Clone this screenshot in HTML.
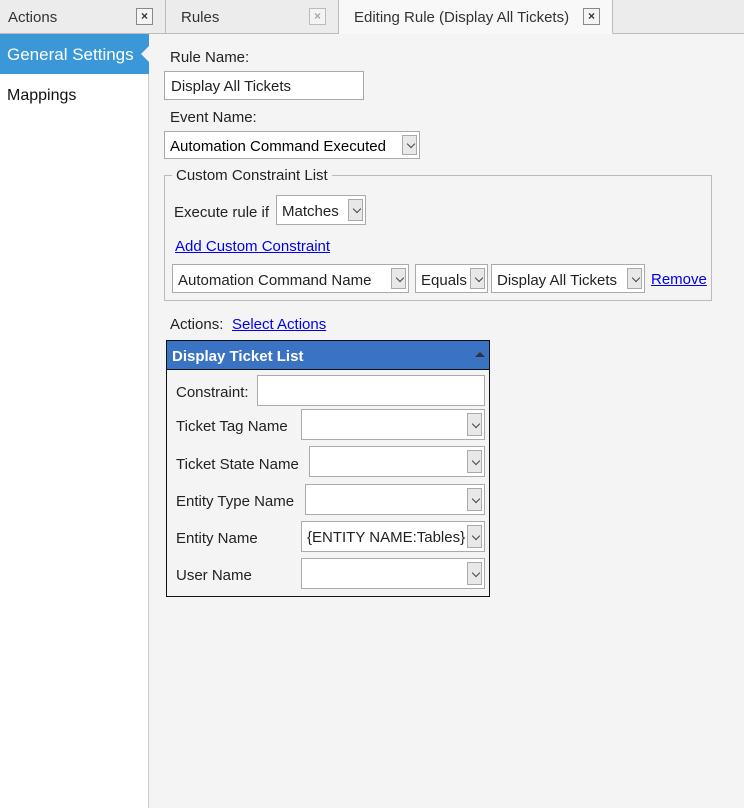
<!DOCTYPE html><html><head><style>
*{box-sizing:border-box;margin:0;padding:0}
body{width:744px;height:808px;background:#f4f4f4;font-family:"Liberation Sans",sans-serif;font-size:15px;color:#222;position:relative;overflow:hidden}
.a{position:absolute}
.tab{position:absolute;top:0;height:34px;border-right:1px solid #bbb;background:#ececec;border-bottom:1px solid #bbb;padding:9px 0 0 8px;color:#333}
.x{position:absolute;top:8px;width:17px;height:17px;border:1px solid #888;font-size:12px;font-weight:bold;text-align:center;line-height:15px;background:#f4f4f4}
.inp{position:absolute;background:#fff;border:1px solid #aaa;padding:6px 0 0 6px;white-space:nowrap;overflow:hidden}
.sel{position:absolute;background:#fff;border:1px solid #aaa;padding:7px 0 0 5px;white-space:nowrap;overflow:hidden}
.sel:after{content:"";position:absolute;right:2px;top:3px;bottom:3px;width:13px;border:1px solid #aaa;background:#e8e8e8}
.sel i{position:absolute;right:5px;top:50%;margin-top:-4px;width:6px;height:6px;border-right:1.5px solid #444;border-bottom:1.5px solid #444;transform:rotate(45deg);z-index:1}
a{color:#00e;text-decoration:underline}
</style></head><body>
<div class="a" style="left:0;top:0;width:744px;height:34px;background:#ececec;border-bottom:1px solid #bbb"></div>
<div class="tab" style="left:0;width:166px">Actions<div class="x" style="left:136px">×</div></div>
<div class="tab" style="left:166px;width:173px;padding-left:15px">Rules<div class="x" style="left:143px;color:#aaa;border-color:#bbb">×</div></div>
<div class="tab" style="left:339px;width:274px;background:#f8f8f8;border-bottom-color:#f8f8f8;padding-left:15px">Editing Rule (Display All Tickets)<div class="x" style="left:244px">×</div></div>
<div class="a" style="left:0;top:34px;width:149px;height:774px;background:#fff;border-right:1px solid #ccc"></div>
<div class="a" style="left:0;top:34px;width:149px;height:40px;background:#3a98d8;color:#fff;font-size:17px;padding:11px 0 0 7px">General Settings</div>
<div class="a" style="left:141px;top:46px;width:0;height:0;border-top:8px solid transparent;border-bottom:8px solid transparent;border-right:8px solid #f4f4f4"></div>
<div class="a" style="left:7px;top:87px;font-size:16px;color:#111">Mappings</div>

<div class="a" style="left:170px;top:49px">Rule Name:</div>
<div class="inp" style="left:164px;top:71px;width:200px;height:29px">Display All Tickets</div>
<div class="a" style="left:170px;top:109px">Event Name:</div>
<div class="sel" style="left:164px;top:131px;width:256px;height:28px;padding-top:6px;color:#000">Automation Command Executed<i></i></div>

<div class="a" style="left:164px;top:175px;width:548px;height:126px;border:1px solid #bbb"></div>
<div class="a" style="left:172px;top:167px;background:#f4f4f4;padding:0 4px">Custom Constraint List</div>
<div class="a" style="left:174px;top:204px">Execute rule if</div>
<div class="sel" style="left:276px;top:195px;width:90px;height:30px">Matches<i></i></div>
<div class="a" style="left:175px;top:238px"><a>Add Custom Constraint</a></div>
<div class="sel" style="left:172px;top:264px;width:237px;height:29px">Automation Command Name<i></i></div>
<div class="sel" style="left:415px;top:264px;width:73px;height:29px">Equals<i></i></div>
<div class="sel" style="left:491px;top:264px;width:154px;height:29px">Display All Tickets<i></i></div>
<div class="a" style="left:651px;top:271px"><a>Remove</a></div>

<div class="a" style="left:170px;top:316px">Actions:</div>
<div class="a" style="left:232px;top:316px"><a>Select Actions</a></div>
<div class="a" style="left:166px;top:340px;width:324px;height:257px;border:1px solid #111;background:#f4f4f4"></div>
<div class="a" style="left:167px;top:341px;width:322px;height:29px;background:#3a72c4;border-bottom:1px solid #111;color:#fff;font-weight:bold;padding:7px 0 0 5px">Display Ticket List</div>
<div class="a" style="left:475px;top:352px;border-left:5px solid transparent;border-right:5px solid transparent;border-bottom:5px solid #333"></div>
<div class="a" style="left:176px;top:384px">Constraint:</div>
<div class="inp" style="left:257px;top:375px;width:228px;height:31px"></div>
<div class="a" style="left:176px;top:418px">Ticket Tag Name</div>
<div class="sel" style="left:301px;top:409px;width:184px;height:31px"><i></i></div>
<div class="a" style="left:176px;top:456px">Ticket State Name</div>
<div class="sel" style="left:309px;top:446px;width:176px;height:31px"><i></i></div>
<div class="a" style="left:176px;top:493px">Entity Type Name</div>
<div class="sel" style="left:305px;top:484px;width:180px;height:31px"><i></i></div>
<div class="a" style="left:176px;top:530px">Entity Name</div>
<div class="sel" style="left:301px;top:521px;width:184px;height:31px;padding-top:7px">{ENTITY NAME:Tables}<i></i></div>
<div class="a" style="left:176px;top:567px">User Name</div>
<div class="sel" style="left:301px;top:558px;width:184px;height:31px"><i></i></div>
</body></html>
